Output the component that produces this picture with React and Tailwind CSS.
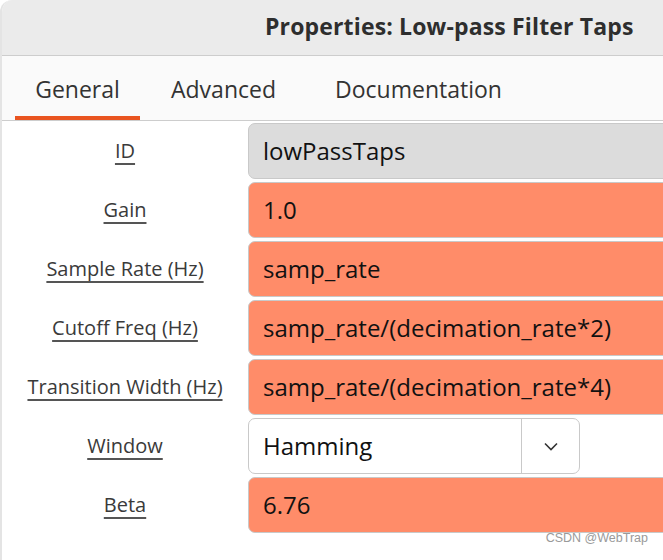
import React from 'react'

const rows = [
    { label: 'ID', value: 'lowPassTaps', kind: 'id' },
    { label: 'Gain', value: '1.0', kind: 'float' },
    { label: 'Sample Rate (Hz)', value: 'samp_rate', kind: 'float' },
    { label: 'Cutoff Freq (Hz)', value: 'samp_rate/(decimation_rate*2)', kind: 'float' },
    { label: 'Transition Width (Hz)', value: 'samp_rate/(decimation_rate*4)', kind: 'float' },
    { label: 'Window', value: 'Hamming', kind: 'enum' },
    { label: 'Beta', value: '6.76', kind: 'float' },
]

const Field = ({ row }) => {
    if (row.kind === 'enum') {
        return (
            <div className="flex h-[56px] w-[332px] shrink-0 rounded-[7px] border border-[#c9c9c9] bg-white">
                <div className="flex flex-1 items-center border-r border-[#c9c9c9] pl-[14px] text-[24px] text-[#111]">
                    {row.value}
                </div>
                <div className="flex w-[57px] items-center justify-center">
                    <svg width="14" height="9" viewBox="0 0 14 9" fill="none" stroke="#333" strokeWidth="1.6">
                        <path d="M1 1.5l6 6 6-6" />
                    </svg>
                </div>
            </div>
        )
    }
    const bg = row.kind === 'id' ? 'bg-[#dcdcdc]' : 'bg-[#ff8c69]'
    return (
        <div className={`flex h-[56px] w-[430px] shrink-0 items-center rounded-[7px] border border-[#c9c9c9] pl-[14px] text-[24px] text-[#111] ${bg}`}>
            {row.value}
        </div>
    )
}

export default function App() {
    return (
        <div
            className="relative h-[560px] w-[663px] overflow-hidden rounded-tl-[12px] border-l-2 border-[#e4e4e4] bg-white"
            style={{ fontFamily: '"Open Sans", "Noto Sans", sans-serif' }}
        >
            {/* Title bar */}
            <div className="flex h-[56px] items-center border-b border-[#cdcdcd] bg-[#ebebeb] pb-[2px] pl-[263px]">
                <span className="whitespace-nowrap text-[23px] font-bold tracking-[0.15px] text-[#2e2e2e]">Properties: Low-pass Filter Taps</span>
            </div>

            {/* Tabs */}
            <div className="flex h-[65px] items-end border-b border-[#cdcdcd] bg-[#fafafa] pl-[13px]">
                <div className="flex h-full w-[125px] flex-col items-center justify-between">
                    <span className="mt-[16px] text-[23px] text-[#333]">General</span>
                    <div className="h-[4px] w-full bg-[#e95420]" />
                </div>
                <div className="flex h-full w-[167px] justify-center">
                    <span className="mt-[16px] text-[23px] text-[#333]">Advanced</span>
                </div>
                <div className="flex h-full w-[223px] justify-center">
                    <span className="mt-[16px] text-[23px] text-[#333]">Documentation</span>
                </div>
            </div>

            {/* Parameters */}
            <div className="flex flex-col gap-[3px] pt-[2px]">
                {rows.map((row) => (
                    <div key={row.label} className="flex items-center">
                        <div className="flex w-[246px] shrink-0 justify-center">
                            <span className="text-[20px] text-[#3a3a3a] underline decoration-[#555] underline-offset-[5px]">
                                {row.label}
                            </span>
                        </div>
                        <Field row={row} />
                    </div>
                ))}
            </div>

            <span
                className="absolute bottom-[12px] right-[15px] text-[12.5px] text-[#9a9a9a]"
                style={{ fontFamily: '"Liberation Sans", sans-serif' }}
            >
                CSDN @WebTrap
            </span>
        </div>
    )
}
